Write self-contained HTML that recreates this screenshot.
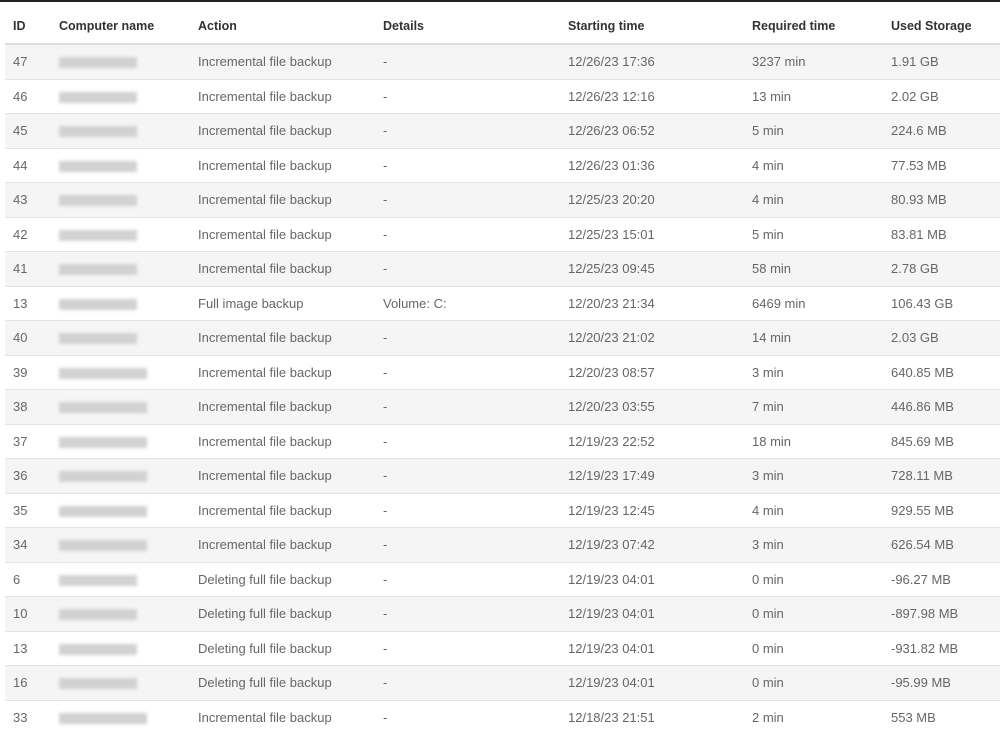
<!DOCTYPE html><html><head><style>
body{margin:0;background:#fff;font-family:"Liberation Sans",Arial,sans-serif;}
.top{position:absolute;left:0;top:0;width:1000px;height:2px;background:#222}
table{position:absolute;left:5px;top:8px;width:995px;border-collapse:collapse;font-size:13px;color:#666}
th{text-align:left;font-weight:bold;color:#333;height:35px;border-bottom:2px solid #ddd;padding:0 0 0 8px;font-size:12.5px}
td{height:33.5px;padding:0 0 0 8px;border-top:1px solid #e4e4e4}
tr:nth-child(odd) td{background:#f5f5f5}
.b{display:inline-block;width:78px;height:11px;background:#d2d2d2;filter:blur(1.5px);vertical-align:middle}
</style></head><body><div class="top"></div>
<table>
<colgroup><col style="width:46px"><col style="width:139px"><col style="width:185px"><col style="width:185px"><col style="width:184px"><col style="width:139px"><col></colgroup>
<thead><tr><th>ID</th><th>Computer name</th><th>Action</th><th>Details</th><th>Starting time</th><th>Required time</th><th>Used Storage</th></tr></thead>
<tbody>
<tr><td>47</td><td><span class="b"></span></td><td>Incremental file backup</td><td>-</td><td>12/26/23 17:36</td><td>3237 min</td><td>1.91 GB</td></tr>
<tr><td>46</td><td><span class="b"></span></td><td>Incremental file backup</td><td>-</td><td>12/26/23 12:16</td><td>13 min</td><td>2.02 GB</td></tr>
<tr><td>45</td><td><span class="b"></span></td><td>Incremental file backup</td><td>-</td><td>12/26/23 06:52</td><td>5 min</td><td>224.6 MB</td></tr>
<tr><td>44</td><td><span class="b"></span></td><td>Incremental file backup</td><td>-</td><td>12/26/23 01:36</td><td>4 min</td><td>77.53 MB</td></tr>
<tr><td>43</td><td><span class="b"></span></td><td>Incremental file backup</td><td>-</td><td>12/25/23 20:20</td><td>4 min</td><td>80.93 MB</td></tr>
<tr><td>42</td><td><span class="b"></span></td><td>Incremental file backup</td><td>-</td><td>12/25/23 15:01</td><td>5 min</td><td>83.81 MB</td></tr>
<tr><td>41</td><td><span class="b"></span></td><td>Incremental file backup</td><td>-</td><td>12/25/23 09:45</td><td>58 min</td><td>2.78 GB</td></tr>
<tr><td>13</td><td><span class="b"></span></td><td>Full image backup</td><td>Volume: C:</td><td>12/20/23 21:34</td><td>6469 min</td><td>106.43 GB</td></tr>
<tr><td>40</td><td><span class="b"></span></td><td>Incremental file backup</td><td>-</td><td>12/20/23 21:02</td><td>14 min</td><td>2.03 GB</td></tr>
<tr><td>39</td><td><span class="b" style="width:88px"></span></td><td>Incremental file backup</td><td>-</td><td>12/20/23 08:57</td><td>3 min</td><td>640.85 MB</td></tr>
<tr><td>38</td><td><span class="b" style="width:88px"></span></td><td>Incremental file backup</td><td>-</td><td>12/20/23 03:55</td><td>7 min</td><td>446.86 MB</td></tr>
<tr><td>37</td><td><span class="b" style="width:88px"></span></td><td>Incremental file backup</td><td>-</td><td>12/19/23 22:52</td><td>18 min</td><td>845.69 MB</td></tr>
<tr><td>36</td><td><span class="b" style="width:88px"></span></td><td>Incremental file backup</td><td>-</td><td>12/19/23 17:49</td><td>3 min</td><td>728.11 MB</td></tr>
<tr><td>35</td><td><span class="b" style="width:88px"></span></td><td>Incremental file backup</td><td>-</td><td>12/19/23 12:45</td><td>4 min</td><td>929.55 MB</td></tr>
<tr><td>34</td><td><span class="b" style="width:88px"></span></td><td>Incremental file backup</td><td>-</td><td>12/19/23 07:42</td><td>3 min</td><td>626.54 MB</td></tr>
<tr><td>6</td><td><span class="b"></span></td><td>Deleting full file backup</td><td>-</td><td>12/19/23 04:01</td><td>0 min</td><td>-96.27 MB</td></tr>
<tr><td>10</td><td><span class="b"></span></td><td>Deleting full file backup</td><td>-</td><td>12/19/23 04:01</td><td>0 min</td><td>-897.98 MB</td></tr>
<tr><td>13</td><td><span class="b"></span></td><td>Deleting full file backup</td><td>-</td><td>12/19/23 04:01</td><td>0 min</td><td>-931.82 MB</td></tr>
<tr><td>16</td><td><span class="b"></span></td><td>Deleting full file backup</td><td>-</td><td>12/19/23 04:01</td><td>0 min</td><td>-95.99 MB</td></tr>
<tr><td>33</td><td><span class="b" style="width:88px"></span></td><td>Incremental file backup</td><td>-</td><td>12/18/23 21:51</td><td>2 min</td><td>553 MB</td></tr>
</tbody></table></body></html>
